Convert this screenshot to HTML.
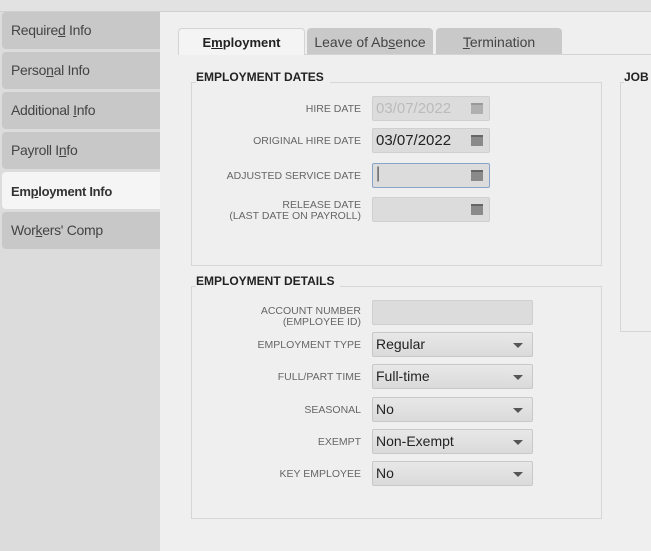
<!DOCTYPE html>
<html><head><style>
*{box-sizing:border-box;margin:0;padding:0}
body{width:651px;height:551px;overflow:hidden;background:#efefef;font-family:"Liberation Sans",sans-serif;position:relative}
.top{position:absolute;left:0;top:0;width:651px;height:12px;background:#e2e2e2;border-bottom:1px solid #d0d0d0}
.side{position:absolute;left:0;top:12px;width:160px;height:539px;background:#dcdcdc}
.st{position:absolute;left:2px;width:158px;height:37px;background:#c8c8c8;border-radius:4px 0 0 4px;font-size:14px;color:#444;padding:10px 0 0 9px;letter-spacing:-0.3px}
.st.act{background:#f5f5f5;font-weight:bold;color:#333;font-size:13px}
.tab{position:absolute;top:28px;height:27px;background:#c9c9c9;border-radius:4px 4px 0 0;font-size:14px;color:#444;text-align:center;padding-top:6px}
.tab.act{background:#f4f4f4;border:1px solid #d4d4d4;border-bottom:none;font-weight:bold;font-size:13px;color:#222;padding-top:6px}
.line{position:absolute;left:305px;top:54px;width:346px;height:1px;background:#d4d4d4}
.fs{position:absolute;border:1px solid #d6d6d6}
.lg{position:absolute;font-weight:bold;font-size:12px;color:#222;background:#efefef;padding-right:6px}
.lb{position:absolute;width:180px;left:181px;text-align:right;font-size:10.5px;color:#666;line-height:11px}
.in{position:absolute;left:372px;height:25px;background:#dcdcdc;border:1px solid #cfcfcf;border-radius:2px;font-size:15px;color:#222;padding:3px 0 0 3px}
.cal{position:absolute;right:6px;top:6px;width:12px;height:11px;background:#8a8a8a;border-top:2px solid #666}
.sel{width:161px;background:linear-gradient(#e8e8e8,#dadada);border:1px solid #c8c8c8;font-size:14px}
.sel:after{content:"";position:absolute;right:9px;top:10px;border-left:5px solid transparent;border-right:5px solid transparent;border-top:5px solid #555}
u{text-decoration:underline}
</style></head><body>
<div class="top"></div>
<div class="side">
<div class="st" style="top:0">Require<u>d</u> Info</div>
<div class="st" style="top:40px">Perso<u>n</u>al Info</div>
<div class="st" style="top:80px">Additional <u>I</u>nfo</div>
<div class="st" style="top:120px">Payroll I<u>n</u>fo</div>
<div class="st act" style="top:160px;padding-top:12px">Em<u>p</u>loyment Info</div>
<div class="st" style="top:200px">Wor<u>k</u>ers' Comp</div>
</div>
<div class="tab act" style="left:178px;width:127px">E<u>m</u>ployment</div>
<div class="tab" style="left:307px;width:126px">Leave of Ab<u>s</u>ence</div>
<div class="tab" style="left:436px;width:126px"><u>T</u>ermination</div>
<div class="line"></div>

<div class="fs" style="left:191px;top:82px;width:411px;height:184px"></div>
<div class="lg" style="left:196px;top:70px">EMPLOYMENT DATES</div>
<div class="fs" style="left:620px;top:82px;width:40px;height:250px"></div>
<div class="lg" style="left:624px;top:70px">JOB</div>

<div class="lb" style="top:104px">HIRE DATE</div>
<div class="in" style="top:96px;width:118px;color:#bbb">03/07/2022<div class="cal" style="background:#b0b0b0;border-color:#999"></div></div>
<div class="lb" style="top:136px">ORIGINAL HIRE DATE</div>
<div class="in" style="top:128px;width:118px">03/07/2022<div class="cal"></div></div>
<div class="lb" style="top:171px">ADJUSTED SERVICE DATE</div>
<div class="in" style="top:163px;width:118px;border-color:#8aa4c8;color:#555;font-size:16px;padding-top:1px">|<div class="cal"></div></div>
<div class="lb" style="top:200px">RELEASE DATE<br>(LAST DATE ON PAYROLL)</div>
<div class="in" style="top:197px;width:118px"><div class="cal"></div></div>

<div class="fs" style="left:191px;top:286px;width:411px;height:233px"></div>
<div class="lg" style="left:196px;top:274px">EMPLOYMENT DETAILS</div>
<div class="lb" style="top:306px">ACCOUNT NUMBER<br>(EMPLOYEE ID)</div>
<div class="in" style="top:300px;width:161px"></div>
<div class="lb" style="top:340px">EMPLOYMENT TYPE</div>
<div class="in sel" style="top:332px">Regular</div>
<div class="lb" style="top:372px">FULL/PART TIME</div>
<div class="in sel" style="top:364px">Full-time</div>
<div class="lb" style="top:405px">SEASONAL</div>
<div class="in sel" style="top:397px">No</div>
<div class="lb" style="top:437px">EXEMPT</div>
<div class="in sel" style="top:429px">Non-Exempt</div>
<div class="lb" style="top:469px">KEY EMPLOYEE</div>
<div class="in sel" style="top:461px">No</div>
</body></html>
